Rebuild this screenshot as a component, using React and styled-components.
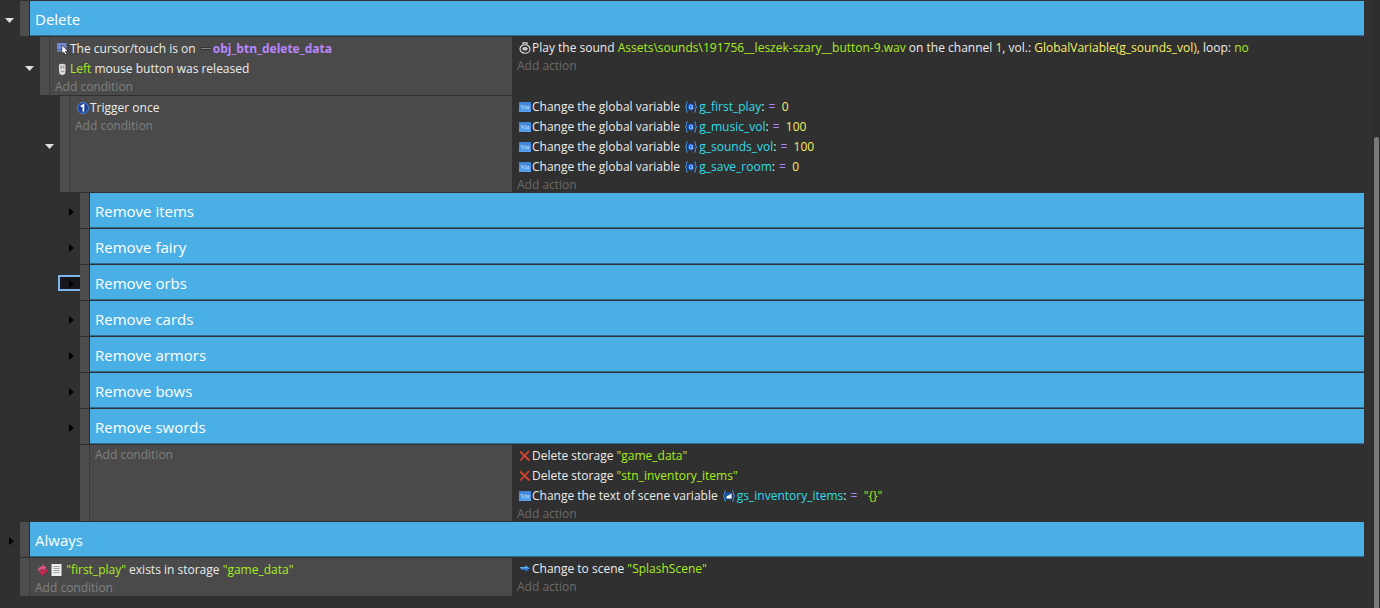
import styled, { createGlobalStyle, css } from "styled-components";

const GlobalStyle = createGlobalStyle`
  * {
    box-sizing: border-box;
  }

  body {
    margin: 0;
    background-color: #303030;
    color: #ececec;
    font-family: "Open Sans", "Noto Sans", sans-serif;
    font-size: 12px;
  }
`;

const Page = styled.div`
  display: flex;
  min-height: 100vh;
`;

const Sheet = styled.main`
  flex: 1;
  min-width: 0;
  padding-top: 1px;
  padding-right: 8px;
`;

const ScrollTrack = styled.div`
  display: flex;
  flex-direction: column;
  width: 8px;
  padding: 137px 1px 0 2px;
  background-color: #2d2d2d;
`;

const ScrollThumb = styled.div`
  flex: 1;
  border-radius: 3px 3px 0 0;
  background-color: #797979;
`;

const Row = styled.section`
  display: flex;
  margin-bottom: 1px;
  padding-left: ${({ $depth }) => $depth * 20}px;
`;

const ToggleCell = styled.div`
  display: flex;
  align-items: center;
  width: 20px;
  padding-top: ${({ $open }) => ($open ? 4 : 0)}px;
`;

const Toggle = styled.button`
  display: flex;
  align-items: center;
  justify-content: flex-end;
  width: 20px;
  height: 12px;
  padding: ${({ $open }) => ($open ? "0 6px 0 0" : "2px 6px 0 0")};
  border: none;
  background: none;
  cursor: pointer;

  ${({ $focused }) =>
    $focused &&
    css`
      outline: 2px solid #7db4ea;
      background-color: #15171c;
    `}
`;

const Handle = styled.div`
  position: relative;
  width: 10px;
  border-right: 1px solid ${({ $dark }) => ($dark ? "#1f2d36" : "#3a3a3a")};
  background-color: #4d4d4d;
`;

const GroupTitle = styled.h2`
  flex: 1;
  height: 35px;
  margin: 0;
  padding-left: 5px;
  border-bottom: 1px solid #2c6d90;
  background-color: #4aafe4;
  color: #fff;
  font-size: 15px;
  font-weight: 500;
  line-height: 36px;
`;

const Conditions = styled.div`
  flex: none;
  width: ${({ $depth }) => 482 - $depth * 20}px;
  padding: 1px 0 1px 5px;
  background-color: #4a4a4a;
`;

const Actions = styled.div`
  flex: 1;
  min-width: 0;
  padding-left: 5px;
`;

const Line = styled.div`
  display: flex;
  align-items: center;
  gap: 1px;
  height: 20px;
  padding: 2px 0 0 2px;
  line-height: 18px;
  white-space: pre;
`;

const AddButton = styled.button`
  display: block;
  height: 16px;
  padding: 2px 0 0;
  border: none;
  background: none;
  color: ${({ $dim }) => ($dim ? "#6a6a6a" : "#808080")};
  font: inherit;
  line-height: 14px;
  cursor: pointer;
`;

const Str = styled.span`
  color: #a8ec1e;
`;

const Num = styled.span`
  color: #f8ee62;
`;

const Operator = styled.span`
  margin-left: 1px;
  color: #ae81ff;
`;

const ObjectName = styled.span`
  color: #b886ff;
  font-weight: 700;
`;

const Variable = styled.span`
  margin-left: 1px;
  color: #2fdde8;
`;

const Icon = styled.svg.attrs({ viewBox: "0 0 12 12", "aria-hidden": true })`
  flex: none;
  width: 12px;
  height: 12px;
`;

const ScopeIcon = styled(Icon)`
  margin-left: 1px;
`;

const ArrowDown = () => (
  <svg width="9" height="5" viewBox="0 0 9 5" aria-hidden="true">
    <path d="M0 0h9L4.500 5z" fill="#e0e0e0" />
  </svg>
);

const ArrowRight = () => (
  <svg width="5" height="8" viewBox="0 0 5 8" aria-hidden="true">
    <path d="M0 0l5 4-5 4z" fill="#000" />
  </svg>
);

const CursorIcon = () => (
  <Icon>
    <rect x="0" y="0" width="9.500" height="8.500" fill="#7388d6" />
    <path d="M0 6.500h9" stroke="#4b61b8" />
    <path d="M4.800 2v8.800l2-1.700 1.300 2.600 1.700-.8-1.300-2.500h2.700z" fill="#fff" stroke="#1c1c1c" strokeWidth="0.700" />
  </Icon>
);

const MouseIcon = () => (
  <Icon>
    <path d="M2 1.500Q5 0 8.500 1.500V8q0 4-3.200 4T2 8z" fill="#dcdcdc" />
    <path d="M3.600 2.500h1.300V5.500H3.600zM6.200 2.500h1v3h-1z" fill="#8a8a8a" />
    <path d="M3.800 8.200q1.600 1 3.400 0" stroke="#8c8c8c" fill="none" />
  </Icon>
);

const OnceIcon = () => (
  <Icon>
    <circle cx="6" cy="6" r="5.500" fill="#1c3f9c" stroke="#4f86d8" />
    <path d="M3.800 4.600L6.400 3V9.400" stroke="#fff" strokeWidth="1.800" fill="none" />
  </Icon>
);

const SoundIcon = () => (
  <Icon>
    <path d="M4 2.300V.8h4v1.500" stroke="#d8d8d8" fill="none" strokeWidth="1.200" />
    <ellipse cx="6" cy="7" rx="5" ry="4.300" fill="#2c2c2c" stroke="#e4e4e4" strokeWidth="1.100" />
    <path d="M3 6.200Q6 3.200 9 6.200L8 8H4z" fill="#c9c9c9" />
    <path d="M4 8.500h4" stroke="#777" />
  </Icon>
);

const VarBox = styled.span`
  flex: none;
  width: 12px;
  height: 10px;
  background: linear-gradient(#3b82d8, #5aa2ee);
  color: #cfe5fc;
  font: 7px/10px "Liberation Serif", serif;
  text-align: center;
`;

const VarIcon = () => <VarBox aria-hidden="true">Var</VarBox>;

const CrossIcon = () => (
  <Icon>
    <path d="M1 1.500l9.500 9M10 1L1.300 10.500" stroke="#d8432c" strokeWidth="1.800" />
  </Icon>
);

const SceneIcon = () => (
  <Icon>
    <path d="M.5 4h6V2L11 5.500l-4.500 3.500V7h-4z" fill="#2a6cc4" />
    <path d="M.5 4h6V2.500L10.500 5.500H2z" fill="#5cb2f2" />
  </Icon>
);

const InvertIcon = () => (
  <Icon>
    <path d="M1 6.500q0-4 4.500-4.300V0l4 3.700-4 3v-2q-2.500.2-2.500 2.300z" fill="#e0527f" />
    <path d="M10.500 5q0 5-4.500 5v2L1.700 8.300 6 5.300v2q2.200-.2 2.200-2.300z" fill="#c4284f" />
  </Icon>
);

const StorageIcon = () => (
  <Icon>
    <rect x="1.500" y="0" width="10" height="12" fill="#ededed" />
    <path d="M3.500 2.500h6M3.500 4.500h6M3.500 6.500h6M3.500 8.500h6" stroke="#9a9a9a" strokeWidth="0.900" />
  </Icon>
);

const ObjectIcon = () => (
  <Icon>
    <rect x="0.500" y="4" width="11" height="3" fill="#333" />
    <path d="M1 5.500h10" stroke="#858585" />
  </Icon>
);

const Braces = () => (
  <path
    d="M3 .8Q1.500.8 1.500 2.500v2L.3 6l1.200 1.500v2q0 1.700 1.500 1.700M9 .8q1.500 0 1.500 1.700v2L11.700 6l-1.200 1.500v2q0 1.700-1.500 1.700"
    stroke="#3f86cc"
    strokeWidth="1.100"
    fill="none"
  />
);

const GlobalVarIcon = () => (
  <ScopeIcon>
    <Braces />
    <circle cx="6" cy="6" r="3.400" fill="#0f4fd0" />
    <path d="M7.800 4.700Q4.400 3.100 4.400 6T7.600 7.600V6H6" stroke="#b4dcff" fill="none" />
  </ScopeIcon>
);

const SceneVarIcon = () => (
  <ScopeIcon>
    <Braces />
    <rect x="2.600" y="2.600" width="6.800" height="6.800" fill="#1a5cae" />
    <path d="M3.500 8.500v-2l2-1 3-2v5z" fill="#fff" />
  </ScopeIcon>
);

const Group = ({ depth = 0, title, open = false, focused = false }) => (
  <Row $depth={depth}>
    <ToggleCell $open={open}>
      <Toggle $open={open} $focused={focused} aria-label={title} aria-expanded={open}>
        {open ? <ArrowDown /> : <ArrowRight />}
      </Toggle>
    </ToggleCell>
    <Handle $dark />
    <GroupTitle>{title}</GroupTitle>
  </Row>
);

const Event = ({ depth = 0, open = false, conditions, children }) => (
  <Row $depth={depth}>
    <ToggleCell $open={open}>
      {open && (
        <Toggle $open aria-label="Sub-events" aria-expanded>
          <ArrowDown />
        </Toggle>
      )}
    </ToggleCell>
    <Handle />
    <Conditions $depth={depth}>
      {conditions}
      <AddButton>Add condition</AddButton>
    </Conditions>
    <Actions>
      {children}
      <AddButton $dim>Add action</AddButton>
    </Actions>
  </Row>
);

const globals = [
  { name: "g_first_play", value: "0" },
  { name: "g_music_vol", value: "100" },
  { name: "g_sounds_vol", value: "100" },
  { name: "g_save_room", value: "0" },
];

const removals = ["items", "fairy", "orbs", "cards", "armors", "bows", "swords"];

const App = () => {
  return (
    <Page>
      <GlobalStyle />
      <Sheet>
        <Group title="Delete" open />
        <Event
          depth={1}
          open
          conditions={
            <>
              <Line>
                <CursorIcon />
                <span>The cursor/touch is on </span>
                <ObjectIcon />
                <ObjectName>obj_btn_delete_data</ObjectName>
              </Line>
              <Line>
                <MouseIcon />
                <span>
                  <Str>Left</Str> mouse button was released
                </span>
              </Line>
            </>
          }
        >
          <Line>
            <SoundIcon />
            <span>
              Play the sound <Str>Assets\sounds\191756__leszek-szary__button-9.wav</Str> on the channel{" "}
              <Num>1</Num>, vol.: <Num>GlobalVariable(g_sounds_vol)</Num>, loop: <Str>no</Str>
            </span>
          </Line>
        </Event>

        <Event
          depth={2}
          open
          conditions={
            <Line>
              <OnceIcon />
              <span>Trigger once</span>
            </Line>
          }
        >
          {globals.map(({ name, value }) => (
            <Line key={name}>
              <VarIcon />
              <span>Change the global variable </span>
              <GlobalVarIcon />
              <span>
                <Variable>{name}</Variable>: <Operator>=</Operator>
                {"  "}
                <Num>{value}</Num>
              </span>
            </Line>
          ))}
        </Event>

        {removals.map((name) => (
          <Group key={name} depth={3} title={`Remove ${name}`} focused={name === "orbs"} />
        ))}

        <Event depth={3}>
          <Line>
            <CrossIcon />
            <span>
              Delete storage <Str>"game_data"</Str>
            </span>
          </Line>
          <Line>
            <CrossIcon />
            <span>
              Delete storage <Str>"stn_inventory_items"</Str>
            </span>
          </Line>
          <Line>
            <VarIcon />
            <span>Change the text of scene variable </span>
            <SceneVarIcon />
            <span>
              <Variable>gs_inventory_items</Variable>: <Operator>=</Operator>
              {"  "}
              <Str>{'"{}"'}</Str>
            </span>
          </Line>
        </Event>

        <Group title="Always" />
        <Event
          conditions={
            <Line>
              <InvertIcon />
              <StorageIcon />
              <span>
                {" "}
                <Str>"first_play"</Str> exists in storage <Str>"game_data"</Str>
              </span>
            </Line>
          }
        >
          <Line>
            <SceneIcon />
            <span>
              Change to scene <Str>"SplashScene"</Str>
            </span>
          </Line>
        </Event>
      </Sheet>
      <ScrollTrack>
        <ScrollThumb />
      </ScrollTrack>
    </Page>
  );
};

export default App;
